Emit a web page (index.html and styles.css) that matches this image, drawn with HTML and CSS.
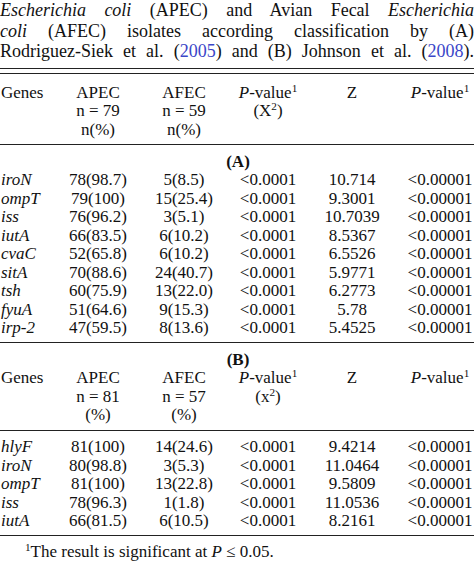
FILE: index.html
```html
<!DOCTYPE html>
<html>
<head>
<meta charset="utf-8">
<title>Table</title>
<link rel="stylesheet" href="styles.css">
</head>
<body>
<div class="page">
  <div class="caption">
    <p class="cline"><i>Escherichia coli</i> (APEC) and Avian Fecal <i>Escherichia</i></p>
    <p class="cline"><i>coli</i> (AFEC) isolates according classification by (A)</p>
    <p class="cline">Rodriguez-Siek et al. (<span class="cite">2005</span>) and (B) Johnson et al. (<span class="cite">2008</span>).</p>
  </div>
  <div class="double-rule"></div>

  <div class="group head">
    <div class="row">
      <div class="cell left">Genes</div>
      <div class="cell">APEC<br>n = 79<br>n(%)</div>
      <div class="cell">AFEC<br>n = 59<br>n(%)</div>
      <div class="cell"><i>P</i>-value<sup>1</sup><br>(X<sup>2</sup>)</div>
      <div class="cell">Z</div>
      <div class="cell"><i>P</i>-value<sup>1</sup></div>
    </div>
  </div>
  <div class="rule"></div>

  <div class="group">
    <div class="section-title">(A)</div>
    <div class="row"><div class="cell left gene">iroN</div><div class="cell">78(98.7)</div><div class="cell">5(8.5)</div><div class="cell">&lt;0.0001</div><div class="cell">10.714</div><div class="cell">&lt;0.00001</div></div>
    <div class="row"><div class="cell left gene">ompT</div><div class="cell">79(100)</div><div class="cell">15(25.4)</div><div class="cell">&lt;0.0001</div><div class="cell">9.3001</div><div class="cell">&lt;0.00001</div></div>
    <div class="row"><div class="cell left gene">iss</div><div class="cell">76(96.2)</div><div class="cell">3(5.1)</div><div class="cell">&lt;0.0001</div><div class="cell">10.7039</div><div class="cell">&lt;0.00001</div></div>
    <div class="row"><div class="cell left gene">iutA</div><div class="cell">66(83.5)</div><div class="cell">6(10.2)</div><div class="cell">&lt;0.0001</div><div class="cell">8.5367</div><div class="cell">&lt;0.00001</div></div>
    <div class="row"><div class="cell left gene">cvaC</div><div class="cell">52(65.8)</div><div class="cell">6(10.2)</div><div class="cell">&lt;0.0001</div><div class="cell">6.5526</div><div class="cell">&lt;0.00001</div></div>
    <div class="row"><div class="cell left gene">sitA</div><div class="cell">70(88.6)</div><div class="cell">24(40.7)</div><div class="cell">&lt;0.0001</div><div class="cell">5.9771</div><div class="cell">&lt;0.00001</div></div>
    <div class="row"><div class="cell left gene">tsh</div><div class="cell">60(75.9)</div><div class="cell">13(22.0)</div><div class="cell">&lt;0.0001</div><div class="cell">6.2773</div><div class="cell">&lt;0.00001</div></div>
    <div class="row"><div class="cell left gene">fyuA</div><div class="cell">51(64.6)</div><div class="cell">9(15.3)</div><div class="cell">&lt;0.0001</div><div class="cell">5.78</div><div class="cell">&lt;0.00001</div></div>
    <div class="row"><div class="cell left gene">irp-2</div><div class="cell">47(59.5)</div><div class="cell">8(13.6)</div><div class="cell">&lt;0.0001</div><div class="cell">5.4525</div><div class="cell">&lt;0.00001</div></div>
  </div>
  <div class="rule"></div>

  <div class="group">
    <div class="section-title">(B)</div>
    <div class="row">
      <div class="cell left">Genes</div>
      <div class="cell">APEC<br>n = 81<br>(%)</div>
      <div class="cell">AFEC<br>n = 57<br>(%)</div>
      <div class="cell"><i>P</i>-value<sup>1</sup><br>(x<sup>2</sup>)</div>
      <div class="cell">Z</div>
      <div class="cell"><i>P</i>-value<sup>1</sup></div>
    </div>
  </div>
  <div class="rule"></div>

  <div class="group">
    <div class="row"><div class="cell left gene">hlyF</div><div class="cell">81(100)</div><div class="cell">14(24.6)</div><div class="cell">&lt;0.0001</div><div class="cell">9.4214</div><div class="cell">&lt;0.00001</div></div>
    <div class="row"><div class="cell left gene">iroN</div><div class="cell">80(98.8)</div><div class="cell">3(5.3)</div><div class="cell">&lt;0.0001</div><div class="cell">11.0464</div><div class="cell">&lt;0.00001</div></div>
    <div class="row"><div class="cell left gene">ompT</div><div class="cell">81(100)</div><div class="cell">13(22.8)</div><div class="cell">&lt;0.0001</div><div class="cell">9.5809</div><div class="cell">&lt;0.00001</div></div>
    <div class="row"><div class="cell left gene">iss</div><div class="cell">78(96.3)</div><div class="cell">1(1.8)</div><div class="cell">&lt;0.0001</div><div class="cell">11.0536</div><div class="cell">&lt;0.00001</div></div>
    <div class="row"><div class="cell left gene">iutA</div><div class="cell">66(81.5)</div><div class="cell">6(10.5)</div><div class="cell">&lt;0.0001</div><div class="cell">8.2161</div><div class="cell">&lt;0.00001</div></div>
  </div>
  <div class="rule"></div>

  <p class="footnote"><sup>1</sup>The result is significant at <i>P</i> &le; 0.05.</p>
</div>
</body>
</html>
```

FILE: styles.css
```css
html, body {
  margin: 0;
  padding: 0;
  background: #ffffff;
  overflow: hidden;
}

.page {
  width: 478px;
  font-family: "Liberation Serif", "Times New Roman", serif;
  font-size: 17px;
  color: #111111;
}

.caption {
  width: 474px;
  margin: 0 0 6.5px 0;
  font-size: 18px;
}

.cline {
  margin: 0;
  line-height: 20.5px;
  text-align: justify;
  text-align-last: justify;
}

.cite {
  color: #3a46c8;
}

.double-rule {
  height: 4px;
  border-top: 1px solid #222222;
  border-bottom: 1px solid #222222;
}

.rule {
  height: 0;
  border-top: 1px solid #222222;
}

.group {
  padding: 7.5px 0 4.75px 0;
  line-height: 18.5px;
}

.group.head {
  padding-top: 9.75px;
}

.row {
  display: grid;
  grid-template-columns: 56px 84px 88px 80px 88px 88px;
}

.cell {
  text-align: center;
  white-space: nowrap;
}

.cell.left {
  text-align: left;
  padding-left: 1px;
}

.gene {
  font-style: italic;
}

.section-title {
  text-align: center;
  font-weight: bold;
  padding-right: 2px;
}

sup {
  font-size: 0.66em;
  line-height: 0;
  vertical-align: 0.5em;
}

.footnote {
  margin: 7px 0 0 0;
  padding-left: 25px;
  line-height: 18.5px;
}
```
